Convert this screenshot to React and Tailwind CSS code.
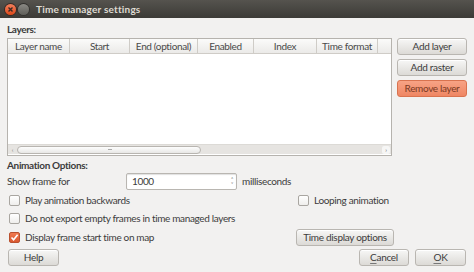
import React from "react";

const font = { fontFamily: 'Lato, "Open Sans", "DejaVu Sans", sans-serif' };

function Btn({ children, className = "" }) {
  return (
    <div
      className={
        "flex items-center justify-center rounded-[3px] border border-[#b9b6b1] bg-gradient-to-b from-[#f7f7f6] to-[#dcdad6] text-[10px] tracking-[-0.3px] text-[#3c3c3c] shadow-[inset_0_1px_0_#ffffff] " +
        className
      }
    >
      {children}
    </div>
  );
}

function Check({ checked }) {
  return checked ? (
    <div className="flex h-[11px] w-[11px] items-center justify-center rounded-[2px] border border-[#b9502e] bg-gradient-to-b from-[#f07a50] to-[#d9572e]">
      <svg width="9" height="9" viewBox="0 0 9 9">
        <path d="M1.5 4.5 L3.6 6.8 L7.6 1.8" stroke="#fff" strokeWidth="1.6" fill="none" />
      </svg>
    </div>
  ) : (
    <div className="h-[11px] w-[11px] rounded-[2px] border border-[#a9a6a1] bg-gradient-to-b from-[#ffffff] to-[#efeeec]" />
  );
}

export default function App() {
  const cols = [
    ["Layer name", 62],
    ["Start", 60],
    ["End (optional)", 68],
    ["Enabled", 56],
    ["Index", 63],
    ["Time format", 61],
  ];
  return (
    <div className="h-[272px] w-[474px] overflow-hidden bg-[#f2f1f0] text-[10px] tracking-[-0.35px] text-[#3c3c3c]" style={font}>
      {/* title bar */}
      <div className="flex h-[18px] items-center bg-gradient-to-b from-[#55534e] to-[#3c3b37] pl-[5px]">
        <div className="flex h-[11px] w-[11px] items-center justify-center rounded-full bg-gradient-to-b from-[#f27e5a] to-[#dd4814] shadow-[0_0_0_1px_#3a2a24]">
          <svg width="7" height="7" viewBox="0 0 7 7">
            <path d="M1.5 1.5 L5.5 5.5 M5.5 1.5 L1.5 5.5" stroke="#3c2a24" strokeWidth="1.4" />
          </svg>
        </div>
        <div className="ml-[2px] h-[11px] w-[11px] rounded-full bg-gradient-to-b from-[#8a8984] to-[#5f5e59] shadow-[0_0_0_1px_#33322f]" />
        <div className="ml-[7px] text-[10px] font-bold tracking-[0.2px] text-[#dfdbd2]">Time manager settings</div>
      </div>

      <div className="px-[7px]">
        <div className="mt-[4px] h-[14px] font-bold leading-[14px]">Layers:</div>
        <div className="mt-[2px] flex">
          {/* table */}
          <div className="h-[118px] w-[387px] border border-[#b6b3ae] bg-white">
            <div className="flex h-[15px] border-b border-[#cfccc7] bg-gradient-to-b from-[#fbfbfa] to-[#ebeae8]">
              {cols.map(([t, w]) => (
                <div
                  key={t}
                  className="flex shrink-0 items-center justify-center border-r border-[#cfccc7] leading-none text-[#4a4a4a]"
                  style={{ width: w }}
                >
                  {t}
                </div>
              ))}
            </div>
            <div className="h-[90px]" />
            <div className="flex h-[10px] items-center border-t border-[#dcdad6] bg-[#e6e4e1]">
              <div className="flex w-[9px] items-center justify-center text-[6px] text-[#777]">‹</div>
              <div className="relative h-[8px] w-[184px] rounded-[4px] border border-[#b8b5b0] bg-gradient-to-b from-[#fdfdfd] to-[#e8e7e5]">
                <div className="absolute left-[90px] top-[2px] h-[2px] w-[4px] border-t border-[#aaa]" />
              </div>
              <div className="flex-1" />
              <div className="mr-[1px] flex h-[8px] w-[8px] items-center justify-center rounded-[2px] bg-[#f6f6f5] text-[6px] text-[#555]">›</div>
            </div>
          </div>
          {/* right buttons */}
          <div className="ml-[5px] flex flex-col gap-[4px]">
            <Btn className="h-[17px] w-[70px]">Add layer</Btn>
            <Btn className="h-[17px] w-[70px]">Add raster</Btn>
            <div className="flex h-[17px] w-[70px] items-center justify-center rounded-[3px] border border-[#d9734f] bg-gradient-to-b from-[#f7a385] to-[#ef8663] text-[#7a3a24]">
              Remove layer
            </div>
          </div>
        </div>

        <div className="mt-[2px] h-[14px] font-bold leading-[14px]">Animation Options:</div>

        <div className="mt-[1px] flex h-[17px] items-center">
          <div className="w-[119px]">Show frame for</div>
          <div className="flex h-[17px] w-[111px] items-center rounded-[2px] border border-[#b9b6b1] bg-white pl-[5px] shadow-[inset_0_1px_1px_#e0e0e0]">
            <span className="flex-1">1000</span>
            <div className="flex w-[8px] flex-col items-center text-[5px] leading-[5px] text-[#777]">
              <span>˄</span>
              <span>˅</span>
            </div>
          </div>
          <div className="ml-[5px]">milliseconds</div>
        </div>

        <div className="mt-[2px] flex h-[17px] items-center">
          <div className="ml-[2px] flex w-[289px] items-center gap-[5px]">
            <Check />
            <span>Play animation backwards</span>
          </div>
          <div className="flex items-center gap-[5px]">
            <Check />
            <span>Looping animation</span>
          </div>
        </div>

        <div className="mt-[1px] flex h-[17px] items-center gap-[5px] pl-[2px]">
          <Check />
          <span>Do not export empty frames in time managed layers</span>
        </div>

        <div className="mt-[1px] flex h-[18px] items-center">
          <div className="ml-[2px] flex w-[287px] items-center gap-[5px]">
            <Check checked />
            <span>Display frame start time on map</span>
          </div>
          <Btn className="h-[17px] w-[98px]">Time display options</Btn>
        </div>

        <div className="mt-[3px] flex items-center">
          <Btn className="ml-[1px] h-[17px] w-[51px]">Help</Btn>
          <div className="flex-1" />
          <Btn className="h-[17px] w-[50px]">
            <span className="underline decoration-[#777] underline-offset-2">C</span>ancel
          </Btn>
          <Btn className="ml-[6px] mr-[1px] h-[17px] w-[51px]">
            <span className="underline decoration-[#777] underline-offset-2">O</span>K
          </Btn>
        </div>
      </div>
    </div>
  );
}
